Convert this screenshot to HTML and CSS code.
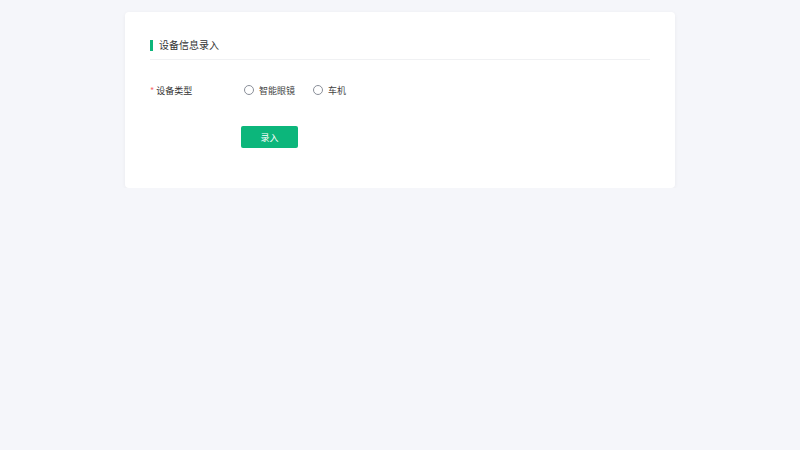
FILE: index.html
```html
<!DOCTYPE html>
<html lang="zh-CN">
<head>
    <meta charset="UTF-8">
    <meta name="viewport" content="width=device-width, initial-scale=1.0">
    <title>设备信息录入</title>
    <link rel="stylesheet" href="styles.css">
</head>
<body>
    <div class="card">
        <div class="card-title">
            <span class="title-bar"></span>
            <span class="title-text">设备信息录入</span>
        </div>

        <form class="device-form">
            <div class="form-row">
                <label class="form-label"><span class="required">*</span>设备类型</label>
                <div class="radio-group">
                    <label class="radio"><span class="radio-circle"></span>智能眼镜</label>
                    <label class="radio"><span class="radio-circle"></span>车机</label>
                </div>
            </div>
            <div class="form-actions">
                <button type="button" class="btn-primary">录入</button>
            </div>
        </form>
    </div>
</body>
</html>
```

FILE: styles.css
```css
body {
    font-family: "Noto Sans CJK SC", "Liberation Sans", sans-serif;
    margin: 0;
    padding: 0;
    background-color: #f5f6fa;
    color: #333;
}
.card {
    width: 550px;
    height: 176px;
    box-sizing: border-box;
    margin: 12px auto 0;
    padding: 26px 25px 0;
    background-color: #ffffff;
    border-radius: 4px;
    box-shadow: 0 1px 4px rgba(0, 0, 0, 0.05);
}
.card-title {
    display: flex;
    align-items: center;
    height: 14px;
    padding-bottom: 7px;
    border-bottom: 1px solid #f0f1f3;
}
.title-bar {
    width: 3px;
    height: 11px;
    background-color: #0cb67b;
    margin-right: 6px;
}
.title-text {
    font-size: 10px;
    line-height: 14px;
    color: #333;
}
.device-form {
    margin-top: 20px;
}
.form-row {
    display: flex;
    align-items: center;
    height: 20px;
}
.form-label {
    width: 91px;
    font-size: 9px;
    color: #333;
}
.required {
    color: #f56c6c;
    margin-right: 2px;
}
.radio-group {
    display: flex;
    align-items: center;
    gap: 18px;
    margin-left: 3px;
}
.radio {
    display: flex;
    align-items: center;
    font-size: 9px;
    color: #444;
}
.radio-circle {
    width: 10px;
    height: 10px;
    border: 1px solid #8a8f99;
    border-radius: 50%;
    margin-right: 5px;
    box-sizing: border-box;
}
.form-actions {
    margin-top: 26px;
    padding-left: 91px;
}
.btn-primary {
    display: block;
    width: 57px;
    height: 22px;
    border: none;
    border-radius: 2px;
    background-color: #0cb67b;
    color: #fff;
    font-family: inherit;
    font-size: 9px;
    padding: 0;
    cursor: pointer;
}
```
